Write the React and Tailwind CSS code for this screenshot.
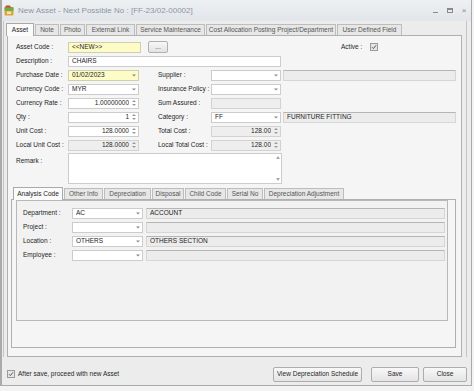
import React from "react";

const Arrow = () => (
  <svg width="4" height="3" viewBox="0 0 4 3" className="shrink-0 ml-[2px]">
    <path d="M0 0.5h4L2 2.5z" fill="#8a8a8a" />
  </svg>
);

const Spin = () => (
  <div className="flex flex-col gap-[2px] items-center w-[5px] shrink-0 ml-[2px]">
    <svg width="4" height="2" viewBox="0 0 4 2">
      <path d="M0 2h4L2 0z" fill="#9a9a9a" />
    </svg>
    <svg width="4" height="2" viewBox="0 0 4 2">
      <path d="M0 0h4L2 2z" fill="#9a9a9a" />
    </svg>
  </div>
);

const Field = ({ className = "", text = "", right = false, arrow = false, spin = false }) => (
  <div className={"h-[11px] border flex items-center pl-[3px] pr-[2px] shrink-0 " + className}>
    <span className={"flex-1 truncate leading-none " + (right ? "text-right" : "")}>{text}</span>
    {arrow && <Arrow />}
    {spin && <Spin />}
  </div>
);

const Check = ({ className = "" }) => (
  <div className={"w-[8px] h-[8px] border border-[#9a9a9a] bg-[#e6e6e6] flex items-center justify-center shrink-0 " + className}>
    <svg width="6" height="6" viewBox="0 0 6 6">
      <path d="M1 3.2L2.4 4.6L5 1.3" stroke="#5a5a5a" strokeWidth="1" fill="none" />
    </svg>
  </div>
);

const Row = ({ children, className = "" }) => (
  <div className={"h-[14px] flex items-center " + className}>{children}</div>
);

const Tab = ({ w, active, children }) => (
  <div
    className={
      "flex items-center justify-center border border-b-0 leading-none whitespace-nowrap " +
      w +
      (active
        ? " h-[13px] bg-[#fbfbfb] border-[#a9a9a9] text-[#222] -mb-px relative z-10"
        : " h-[11px] bg-[#e7e7e7] border-[#bdbdbd] text-[#555]")
    }
  >
    {children}
  </div>
);

const GreyBox = ({ className = "", text = "" }) => (
  <div className={"h-[11px] border border-[#d6d6d6] border-t-[#b5b5b5] bg-[#ececec] flex items-center pl-[3px] leading-none " + className}>
    {text}
  </div>
);

export default function App() {
  return (
    <div className="w-[474px] h-[391px] bg-[#f3f3f3] overflow-hidden font-['Liberation_Sans','Arial',sans-serif] text-[6.5px] text-[#1e1e1e]">
      <div className="w-[472px] h-[386px] border-l-2 border-r border-b border-[#aaaaaa] bg-[#ececec] flex flex-col">
        {/* Title bar */}
        <div className="h-[21px] shrink-0 flex items-center bg-gradient-to-b from-[#eef1f4] to-[#e1e5e9] pl-[2px]">
          <svg width="10" height="11" viewBox="0 0 10 11" className="shrink-0">
            <rect x="0.5" y="2" width="9" height="8.5" rx="1" fill="#e0a43a" />
            <rect x="0.5" y="2" width="9" height="4" rx="1" fill="#6fae48" />
            <path d="M2 0.5h4l1 2H1z" fill="#c84a3a" />
            <rect x="3" y="6.5" width="4" height="2.5" fill="#f5e7b0" />
          </svg>
          <span className="ml-[4px] text-[8px] text-[#8b97a3] leading-none whitespace-nowrap">
            New Asset - Next Possible No : [FF-23/02-00002]
          </span>
          <div className="ml-auto flex items-center text-[#8a8a8a] leading-none">
            <div className="w-[14px] flex justify-center">
              <div className="w-[5px] h-px bg-[#8a8a8a] mt-[3px]" />
            </div>
            <div className="w-[15px] flex justify-center">
              <div className="w-[6px] h-[5px] border border-[#8a8a8a] border-t-2" />
            </div>
            <div className="w-[14px] flex justify-center text-[8px]">×</div>
          </div>
        </div>

        {/* Body */}
        <div className="h-[336px] shrink-0 ml-[1px] mr-[4px] border-x border-[#c4c4c4] pl-[3px] pr-[4px] pt-[2px] flex flex-col">
          {/* main tabs */}
          <div className="h-[12px] flex items-end gap-[1px] -ml-px">
            <Tab w="w-[28px]" active>Asset</Tab>
            <Tab w="w-[24px]">Note</Tab>
            <Tab w="w-[25px]">Photo</Tab>
            <Tab w="w-[49px]">External Link</Tab>
            <Tab w="w-[69px]">Service Maintenance</Tab>
            <Tab w="w-[130px]">Cost Allocation Posting Project/Department</Tab>
            <Tab w="w-[65px]">User Defined Field</Tab>
          </div>
          {/* main panel */}
          <div className="h-[322px] border border-[#b0b0b0] bg-[#f5f5f5] pt-[4px] pl-[3px] pr-[5px]">
            <div className="pl-[5px]">
              <Row>
                <span className="w-[52px] shrink-0">Asset Code :</span>
                <Field className="w-[73px] bg-[#fdfcc6] border-[#cfcfb0]" text="<<NEW>>" />
                <div className="ml-[7px] w-[20px] h-[12px] border border-[#b0b0b0] rounded-[2px] bg-gradient-to-b from-[#f7f7f7] to-[#e3e3e3] flex items-center justify-center leading-none text-[#444]">
                  ...
                </div>
                <span className="ml-[173px] w-[29px] shrink-0">Active :</span>
                <Check />
              </Row>
              <Row>
                <span className="w-[52px] shrink-0">Description :</span>
                <Field className="w-[213px] bg-white border-[#cccccc]" text="CHAIRS" />
              </Row>
              <Row>
                <span className="w-[52px] shrink-0">Purchase Date :</span>
                <Field className="w-[71px] bg-[#fdfcc6] border-[#cfcfb0]" text="01/02/2023" arrow />
                <span className="ml-[19px] w-[53px] shrink-0">Supplier :</span>
                <Field className="w-[70px] bg-white border-[#cccccc]" arrow />
                <GreyBox className="ml-[2px] w-[175px]" />
              </Row>
              <Row>
                <span className="w-[52px] shrink-0">Currency Code :</span>
                <Field className="w-[71px] bg-white border-[#cccccc]" text="MYR" arrow />
                <span className="ml-[19px] w-[53px] shrink-0">Insurance Policy :</span>
                <Field className="w-[70px] bg-white border-[#cccccc]" arrow />
              </Row>
              <Row>
                <span className="w-[52px] shrink-0">Currency Rate :</span>
                <Field className="w-[71px] bg-white border-[#cccccc]" text="1.00000000" right spin />
                <span className="ml-[19px] w-[53px] shrink-0">Sum Assured :</span>
                <Field className="w-[70px] bg-[#eeeeee] border-[#d2d2d2]" />
              </Row>
              <Row>
                <span className="w-[52px] shrink-0">Qty :</span>
                <Field className="w-[71px] bg-white border-[#cccccc]" text="1" right spin />
                <span className="ml-[19px] w-[53px] shrink-0">Category :</span>
                <Field className="w-[70px] bg-white border-[#cccccc]" text="FF" arrow />
                <GreyBox className="ml-[2px] w-[175px]" text="FURNITURE FITTING" />
              </Row>
              <Row>
                <span className="w-[52px] shrink-0">Unit Cost :</span>
                <Field className="w-[71px] bg-white border-[#cccccc]" text="128.0000" right spin />
                <span className="ml-[19px] w-[53px] shrink-0">Total Cost :</span>
                <Field className="w-[70px] bg-[#eeeeee] border-[#d2d2d2]" text="128.00" right spin />
              </Row>
              <Row>
                <span className="w-[52px] shrink-0">Local Unit Cost :</span>
                <Field className="w-[71px] bg-[#eeeeee] border-[#d2d2d2]" text="128.0000" right spin />
                <span className="ml-[19px] w-[53px] shrink-0">Local Total Cost :</span>
                <Field className="w-[70px] bg-[#eeeeee] border-[#d2d2d2]" text="128.00" right spin />
              </Row>
              <div className="mt-[1px] flex items-start">
                <span className="w-[52px] shrink-0 mt-[5px] leading-none">Remark :</span>
                <div className="w-[214px] h-[31px] border border-[#cccccc] bg-white flex justify-end">
                  <div className="w-[7px] flex flex-col justify-between items-center py-[2px]">
                    <svg width="4" height="3" viewBox="0 0 4 3">
                      <path d="M0 3h4L2 0z" fill="#a8a8a8" />
                    </svg>
                    <svg width="4" height="3" viewBox="0 0 4 3">
                      <path d="M0 0h4L2 3z" fill="#a8a8a8" />
                    </svg>
                  </div>
                </div>
              </div>
            </div>

            {/* lower group */}
            <div className="mt-[4px] h-[11px] flex items-end gap-[1px] pl-[2px]">
              <Tab w="w-[50px]" active>Analysis Code</Tab>
              <Tab w="w-[39px]">Other Info</Tab>
              <Tab w="w-[47px]">Depreciation</Tab>
              <Tab w="w-[32px]">Disposal</Tab>
              <Tab w="w-[41px]">Child Code</Tab>
              <Tab w="w-[36px]">Serial No</Tab>
              <Tab w="w-[80px]">Depreciation Adjustment</Tab>
            </div>
            <div className="w-[445px] h-[149px] border border-[#b0b0b0] bg-[#f5f5f5] pl-[4px]">
              <div className="w-[432px] h-[121px] border border-[#b8b8b8] bg-[#f2f2f2] pt-[5px] pl-[6px]">
                <Row>
                  <span className="w-[49px] shrink-0">Department :</span>
                  <Field className="w-[71px] bg-white border-[#cccccc]" text="AC" arrow />
                  <GreyBox className="ml-[3px] w-[299px]" text="ACCOUNT" />
                </Row>
                <Row>
                  <span className="w-[49px] shrink-0">Project :</span>
                  <Field className="w-[71px] bg-white border-[#cccccc]" arrow />
                  <GreyBox className="ml-[3px] w-[299px]" />
                </Row>
                <Row>
                  <span className="w-[49px] shrink-0">Location :</span>
                  <Field className="w-[71px] bg-white border-[#cccccc]" text="OTHERS" arrow />
                  <GreyBox className="ml-[3px] w-[299px]" text="OTHERS SECTION" />
                </Row>
                <Row>
                  <span className="w-[49px] shrink-0">Employee :</span>
                  <Field className="w-[71px] bg-white border-[#cccccc]" arrow />
                  <GreyBox className="ml-[3px] w-[299px]" />
                </Row>
              </div>
            </div>
          </div>
        </div>

        {/* Bottom bar */}
        <div className="h-[28px] shrink-0 flex items-center pt-[6px] pl-[5px] pr-[4px]">
          <Check />
          <span className="ml-[3px] leading-none">After save, proceed with new Asset</span>
          <div className="ml-auto flex items-center">
            <div className="w-[89px] h-[15px] border border-[#adadad] rounded-[2px] bg-gradient-to-b from-[#f8f8f8] to-[#e4e4e4] flex items-center justify-center leading-none">
              View Depreciation Schedule
            </div>
            <div className="ml-[9px] w-[48px] h-[15px] border border-[#adadad] rounded-[2px] bg-gradient-to-b from-[#f8f8f8] to-[#e4e4e4] flex items-center justify-center leading-none">
              Save
            </div>
            <div className="ml-[4px] w-[44px] h-[15px] border border-[#adadad] rounded-[2px] bg-gradient-to-b from-[#f8f8f8] to-[#e4e4e4] flex items-center justify-center leading-none">
              Close
            </div>
          </div>
        </div>
      </div>
    </div>
  );
}
